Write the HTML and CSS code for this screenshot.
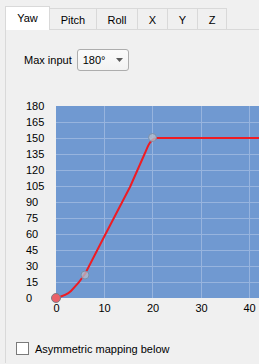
FILE: index.html
```html
<!DOCTYPE html>
<html lang="en">
<head>
    <meta charset="UTF-8" />
    <title>Axis curve</title>
    <link rel="stylesheet" href="styles.css">
</head>
<body>
    <div class="tabs">
        <div class="tab tab-yaw active">Yaw</div>
        <div class="tab tab-pitch">Pitch</div>
        <div class="tab tab-roll">Roll</div>
        <div class="tab tab-x">X</div>
        <div class="tab tab-y">Y</div>
        <div class="tab tab-z">Z</div>
    </div>
    <div class="panel">
        <div class="max-row">
            <span>Max input</span>
            <div class="combo">
                <span>180°</span>
                <svg class="arrow" width="7" height="4" viewBox="0 0 7 4"><path d="M0 0 H7 L3.5 4 Z" fill="#5a5a5a"/></svg>
            </div>
        </div>

        <svg class="chart" width="253" height="222" viewBox="6 96 253 222">
            <!-- plot area -->
            <rect x="56" y="106" width="210" height="192" fill="#7099d1"/>
            <g stroke="#97b4de" stroke-width="1">
                <line x1="56" y1="122.5" x2="259" y2="122.5"/>
                <line x1="56" y1="138.5" x2="259" y2="138.5"/>
                <line x1="56" y1="154.5" x2="259" y2="154.5"/>
                <line x1="56" y1="170.5" x2="259" y2="170.5"/>
                <line x1="56" y1="186.5" x2="259" y2="186.5"/>
                <line x1="56" y1="202.5" x2="259" y2="202.5"/>
                <line x1="56" y1="218.5" x2="259" y2="218.5"/>
                <line x1="56" y1="234.5" x2="259" y2="234.5"/>
                <line x1="56" y1="250.5" x2="259" y2="250.5"/>
                <line x1="56" y1="266.5" x2="259" y2="266.5"/>
                <line x1="56" y1="282.5" x2="259" y2="282.5"/>
                <line x1="104.5" y1="106" x2="104.5" y2="298"/>
                <line x1="152.5" y1="106" x2="152.5" y2="298"/>
                <line x1="201.5" y1="106" x2="201.5" y2="298"/>
                <line x1="249.5" y1="106" x2="249.5" y2="298"/>
            </g>

            <!-- y axis -->
            <g class="axis-text">
                <text x="26" y="110">180</text>
                <text x="26" y="126">165</text>
                <text x="26" y="142">150</text>
                <text x="26" y="158">135</text>
                <text x="26" y="174">120</text>
                <text x="26" y="190">105</text>
                <text x="26" y="206">90</text>
                <text x="26" y="222">75</text>
                <text x="26" y="238">60</text>
                <text x="26" y="254">45</text>
                <text x="26" y="270">30</text>
                <text x="26" y="286">15</text>
                <text x="26" y="302">0</text>
            </g>
            <!-- x axis -->
            <g class="axis-text" text-anchor="middle">
                <text x="56.5" y="312">0</text>
                <text x="104.5" y="312">10</text>
                <text x="153" y="312">20</text>
                <text x="201.5" y="312">30</text>
                <text x="249.5" y="312">40</text>
            </g>

            <!-- curve -->
            <path d="M56,298 C62,296.5 67,295 71,291 C77,285 81,280 85,274 L104,237 L130,187 L145,153 C148,146 150,139 157,138 L260,138"
                  fill="none" stroke="#ee1c24" stroke-width="2" stroke-linejoin="round"/>

            <circle cx="85" cy="275" r="4" fill="#b4bccb" fill-opacity="0.75" stroke="#7890ac" stroke-width="1"/>
            <circle cx="152.5" cy="137.5" r="4" fill="#b4bccb" fill-opacity="0.8" stroke="#7890ac" stroke-width="1"/>
            <circle cx="56" cy="298" r="4.5" fill="#ea6068" stroke="#7d7d86" stroke-width="1"/>
        </svg>

        <label class="check-row">
            <span class="checkbox"></span>
            <span>Asymmetric mapping below</span>
        </label>
    </div>
</body>
</html>
```

FILE: styles.css
```css
body {
    margin: 0;
    background-color: #f0f0f0;
    font-family: "Liberation Sans", Arial, sans-serif;
    font-size: 11px;
    color: #000000;
    overflow: hidden;
}
.tabs {
    display: flex;
    align-items: flex-end;
    height: 23px;
    padding: 6px 0 0 5px;
}
.tab {
    box-sizing: border-box;
    height: 21px;
    margin-left: -1px;
    border: 1px solid #d9d9d9;
    border-bottom: none;
    background-color: #f0f0f0;
    display: flex;
    align-items: center;
    justify-content: center;
    padding-top: 1px;
}
.tab.active {
    height: 24px;
    margin-bottom: -1px;
    background-color: #ffffff;
    position: relative;
    z-index: 1;
    padding-top: 0;
    padding-bottom: 1px;
}
.tab-yaw { width: 45px; margin-left: 0; }
.tab-pitch { width: 48px; }
.tab-roll { width: 42px; }
.tab-x { width: 31px; }
.tab-y { width: 31px; }
.tab-z { width: 30px; }

.panel {
    margin-left: 5px;
    border-left: 1px solid #d9d9d9;
    border-top: 1px solid #d9d9d9;
    height: 333px;
}
.max-row {
    display: flex;
    align-items: center;
    gap: 5px;
    margin: 19px 0 0 18px;
}
.combo {
    box-sizing: border-box;
    width: 52px;
    height: 22px;
    border: 1px solid #adadad;
    border-radius: 3px;
    background: linear-gradient(#fbfbfb, #f2f2f2);
    display: flex;
    align-items: center;
    padding-left: 5px;
}
.combo .arrow {
    margin-left: 11px;
}
.chart {
    display: block;
    margin-top: 25px;
}
.axis-text {
    font-family: "Liberation Sans", Arial, sans-serif;
    font-size: 11px;
    fill: #000000;
}
.check-row {
    display: flex;
    align-items: center;
    gap: 6px;
    margin: 24px 0 0 10px;
}
.checkbox {
    box-sizing: border-box;
    width: 13px;
    height: 13px;
    border: 1px solid #7a7a7a;
    background-color: #ffffff;
}
```
